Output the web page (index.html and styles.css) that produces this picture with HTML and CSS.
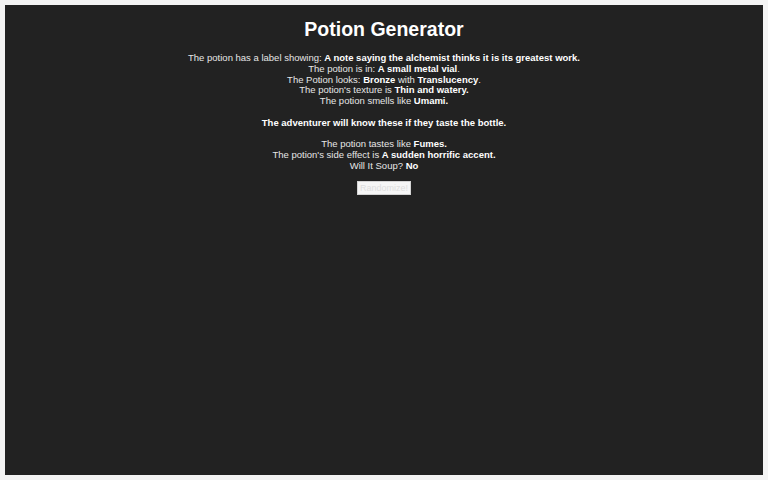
FILE: index.html
```html
<!DOCTYPE html>
<html lang="en">
<head>
<meta charset="utf-8">
<title>Potion Generator</title>
<link rel="stylesheet" href="styles.css">
</head>
<body>
<main class="panel">
  <h1 class="title">Potion Generator</h1>
  <p class="lines">
    The potion has a label showing: <b>A note saying the alchemist thinks it is its greatest work.</b><br>
    The potion is in: <b>A small metal vial</b>.<br>
    The Potion looks: <b>Bronze</b> with <b>Translucency</b>.<br>
    The potion's texture is <b>Thin and watery.</b><br>
    The potion smells like <b>Umami.</b>
  </p>
  <p class="lines"><b>The adventurer will know these if they taste the bottle.</b></p>
  <p class="lines last">
    The potion tastes like <b>Fumes.</b><br>
    The potion's side effect is <b>A sudden horrific accent.</b><br>
    Will It Soup? <b>No</b>
  </p>
  <button class="randomize" type="button">Randomize!</button>
</main>
</body>
</html>
```

FILE: styles.css
```css
html, body {
  margin: 0;
  padding: 0;
}

body {
  background: #f4f4f4;
  padding: 5px;
  font-family: "Liberation Sans", Arial, sans-serif;
}

.panel {
  box-sizing: border-box;
  height: 470px;
  background: #222222;
  color: #e6e6e6;
  text-align: center;
  padding-top: 13px;
}

.title {
  margin: 0 0 13px;
  font-size: 19.5px;
  line-height: 22px;
  font-weight: bold;
  color: #ffffff;
}

.lines {
  margin: 0 0 10.8px;
  font-size: 9.5px;
  line-height: 10.8px;
}

.lines.last {
  margin-bottom: 9px;
}

.lines b {
  color: #ffffff;
}

.randomize {
  display: inline-block;
  vertical-align: top;
  width: 54px;
  height: 14px;
  padding: 0;
  border: 1px solid #d4d4d4;
  background: #f6f6f6;
  color: #dedede;
  font-family: "Liberation Sans", Arial, sans-serif;
  font-size: 9px;
  line-height: 12px;
}
```
